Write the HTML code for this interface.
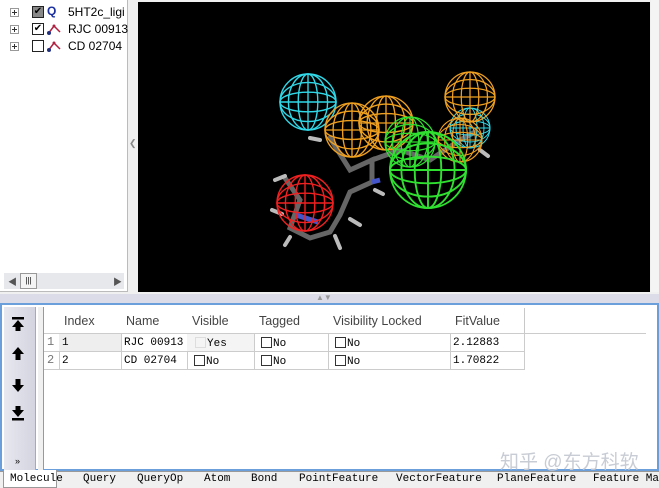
<!DOCTYPE html>
<html><head><style>
*{margin:0;padding:0;box-sizing:border-box}
body{width:659px;height:488px;overflow:hidden;background:#f0f0f0;font-family:"Liberation Sans","Noto Sans CJK SC",sans-serif;position:relative}
.a{position:absolute}
.cb{display:inline-block;width:11px;height:11px;border:1px solid #333;background:#fff;vertical-align:-2px;margin-right:1px}
.hd{position:absolute;top:0;height:25px;border-right:1px solid #c8c8c8;font-size:12.5px;color:#444;padding:6px 0 0 5px;background:#fff}
.c{position:absolute;height:18px;border-right:1px solid #ccc;border-bottom:1px solid #ccc;font-size:11px;padding:3px 0 0 3px;font-family:"Liberation Mono",monospace;color:#000}
.tab{position:absolute;top:473px;font-size:11px;font-family:"Liberation Mono",monospace}
.pl{position:absolute;width:9px;height:9px;border:1px solid #999;background:#fff}
.pl:before{content:"";position:absolute;left:1px;top:3px;width:5px;height:1px;background:#333}
.pl:after{content:"";position:absolute;left:3px;top:1px;width:1px;height:5px;background:#333}
</style></head><body>
<div class="a" style="left:0;top:0;width:128px;height:292px;background:#fff;border-right:1px solid #bbb;border-bottom:1px solid #bbb"></div>
<div class="a" style="left:2px;top:0;width:125px;height:60px;font-size:12px;color:#000">
 <div class="pl" style="left:8px;top:8px"></div>
 <div class="a" style="left:30px;top:6px;width:12px;height:12px;border:1px solid #222;background:#888;color:#000;font-size:10px;line-height:10px;text-align:center">✔</div>
 <div class="a" style="left:45px;top:4px;color:#1a2fa0;font-weight:bold">Q</div>
 <div class="a" style="left:66px;top:5px;white-space:nowrap">5HT2c_ligi</div>
 <div class="pl" style="left:8px;top:25px"></div>
 <div class="a" style="left:30px;top:23px;width:12px;height:12px;border:1px solid #222;background:#fff;font-size:10px;line-height:10px;text-align:center">✔</div>
 <svg class="a" style="left:44px;top:22px" width="16" height="14"><path d="M2 12L8 4L14 10" stroke="#b02040" stroke-width="1.5" fill="none"/><circle cx="3" cy="11" r="2" fill="#203080"/><circle cx="8" cy="4" r="1.5" fill="#b02040"/></svg>
 <div class="a" style="left:66px;top:22px;white-space:nowrap">RJC 00913</div>
 <div class="pl" style="left:8px;top:42px"></div>
 <div class="a" style="left:30px;top:40px;width:12px;height:12px;border:1px solid #222;background:#fff"></div>
 <svg class="a" style="left:44px;top:39px" width="16" height="14"><path d="M2 12L8 4L14 10" stroke="#b02040" stroke-width="1.5" fill="none"/><circle cx="3" cy="11" r="2" fill="#203080"/><circle cx="8" cy="4" r="1.5" fill="#b02040"/></svg>
 <div class="a" style="left:66px;top:39px;white-space:nowrap">CD 02704</div>
</div>
<div class="a" style="left:4px;top:273px;width:120px;height:16px;background:#e6e8ec"></div>
<div class="a" style="left:8px;top:275px;font-size:9px;color:#555">◀</div>
<div class="a" style="left:20px;top:273px;width:17px;height:16px;background:#f4f4f4;border:1px solid #999;font-size:8px;text-align:center;line-height:14px">|||</div>
<div class="a" style="left:113px;top:275px;font-size:9px;color:#555">▶</div>
<div class="a" style="left:129px;top:138px;font-size:9px;color:#888">❮</div>
<div class="a" style="left:138px;top:2px;width:512px;height:290px;background:#000"></div>
<svg class="a" style="left:138px;top:2px" width="512" height="290" viewBox="138 2 512 290">
<defs><symbol id="s" viewBox="-1 -1 2 2" overflow="visible"><g fill="none" stroke-width="0.05">
<circle r="1"/><ellipse rx="0.35" ry="1"/><ellipse rx="0.7" ry="1"/><line x1="0" y1="-1" x2="0" y2="1"/>
<ellipse rx="1" ry="0.35"/><ellipse rx="1" ry="0.7"/><line x1="-1" y1="0" x2="1" y2="0"/></g></symbol></defs>
<g stroke="#666" stroke-width="5" stroke-linecap="round" fill="none">
<path d="M330 138 L350 170 L372 160 L372 182 L350 192 L340 215 L330 232"/>
<path d="M285 178 L300 200 L290 228 L310 238 L330 232"/>
<path d="M372 160 L400 150 L430 160 L460 140 L475 132"/>
</g>
<g stroke="#bbb" stroke-width="4" stroke-linecap="round">
<path d="M275 180l10 -4M272 210l10 4M285 245l5-8M340 248l-5-12M360 225l-10-6M375 190l8 4M480 150l8 6M320 140l-10-2"/>
</g>
<path d="M372 182 L380 180" stroke="#4455cc" stroke-width="5"/>
<path d="M296 215 L318 222" stroke="#4455cc" stroke-width="5"/>
<use href="#s" x="280" y="74" width="56" height="56" stroke="#30d8e8"/>
<use href="#s" x="450" y="108" width="40" height="40" stroke="#30d8e8"/>
<use href="#s" x="325" y="103" width="54" height="54" stroke="#f0a020"/>
<use href="#s" x="359" y="96" width="54" height="54" stroke="#f0a020"/>
<use href="#s" x="445" y="72" width="50" height="50" stroke="#f0a020"/>
<use href="#s" x="438" y="118" width="44" height="44" stroke="#f0a020"/>
<use href="#s" x="385" y="117" width="50" height="50" stroke="#30e030"/>
<use href="#s" x="390" y="132" width="76" height="76" stroke="#30e030"/>
<use href="#s" x="277" y="175" width="56" height="56" stroke="#f02020"/>
</svg>
<div class="a" style="left:651px;top:0;width:8px;height:292px;background:#f4f4f4"></div>
<div class="a" style="left:0;top:294px;width:659px;height:9px;background:#dcdce8"></div>
<div class="a" style="left:316px;top:293px;font-size:8px;color:#999">▲▼</div>
<div class="a" style="left:0;top:303px;width:659px;height:168px;border:2px solid #6a9fdc;background:#fff"></div>
<div class="a" style="left:4px;top:307px;width:32px;height:163px;background:linear-gradient(90deg,#e8e8f0,#d4d4e0);border-right:1px solid #aaa"></div>
<svg class="a" style="left:10px;top:316px" width="18" height="110">
<rect x="2" y="1" width="12" height="2.5"/><path d="M8 4L2 11H5.5V15H10.5V11H14Z"/>
<path d="M8 31L2 38H5.5V44H10.5V38H14Z"/>
<path d="M8 76L2 69H5.5V63H10.5V69H14Z"/>
<path d="M8 101L2 94H5.5V90H10.5V94H14Z"/><rect x="2" y="102" width="12" height="2.5"/>
</svg>
<div class="a" style="left:15px;top:456px;font-size:9px">»</div>
<div class="a" style="left:38px;top:307px;width:6px;height:163px;background:#f0f0f0;border-right:1px solid #999"></div>
<div class="a" style="left:44px;top:308px;width:602px;height:161px;background:#fff">
 <div class="hd" style="left:0;width:16px"></div>
 <div class="hd" style="left:15px;width:63px">Index</div>
 <div class="hd" style="left:77px;width:67px">Name</div>
 <div class="hd" style="left:143px;width:68px">Visible</div>
 <div class="hd" style="left:210px;width:75px">Tagged</div>
 <div class="hd" style="left:284px;width:123px">Visibility Locked</div>
 <div class="hd" style="left:406px;width:75px">FitValue</div>
 <div class="a" style="left:0;top:25px;width:602px;border-top:1px solid #ccc"></div>
 <div class="c" style="left:0;top:26px;width:16px;color:#777;font-size:12px;padding-top:1px">1</div>
 <div class="c" style="left:15px;top:26px;width:63px;background:#eee">1</div>
 <div class="c" style="left:77px;top:26px;width:67px">RJC 00913</div>
 <div class="c" style="left:143px;top:26px;width:68px;background:#f4f4f4;padding-left:8px"><span class="cb" style="border-color:#ddd;background:#f4f4f4"></span>Yes</div>
 <div class="c" style="left:210px;top:26px;width:75px;padding-left:7px"><span class="cb"></span>No</div>
 <div class="c" style="left:284px;top:26px;width:123px;padding-left:7px"><span class="cb"></span>No</div>
 <div class="c" style="left:406px;top:26px;width:75px">2.12883</div>
 <div class="c" style="left:0;top:44px;width:16px;color:#777;font-size:12px;padding-top:1px">2</div>
 <div class="c" style="left:15px;top:44px;width:63px">2</div>
 <div class="c" style="left:77px;top:44px;width:67px">CD 02704</div>
 <div class="c" style="left:143px;top:44px;width:68px;padding-left:7px"><span class="cb"></span>No</div>
 <div class="c" style="left:210px;top:44px;width:75px;padding-left:7px"><span class="cb"></span>No</div>
 <div class="c" style="left:284px;top:44px;width:123px;padding-left:7px"><span class="cb"></span>No</div>
 <div class="c" style="left:406px;top:44px;width:75px">1.70822</div>
</div>
<div class="a" style="left:500px;top:447px;font-size:19px;color:#c8ccd4">知乎 @东方科软</div>
<div class="a" style="left:0;top:471px;width:659px;height:17px;background:#f0f0f0;border-top:1px solid #999"></div>
<div class="a" style="left:3px;top:470px;width:54px;height:18px;background:#fff;border:1px solid #999;border-top:none"></div>
<div class="tab" style="left:10px">Molecule</div>
<div class="tab" style="left:83px">Query</div>
<div class="tab" style="left:137px">QueryOp</div>
<div class="tab" style="left:204px">Atom</div>
<div class="tab" style="left:251px">Bond</div>
<div class="tab" style="left:299px">PointFeature</div>
<div class="tab" style="left:396px">VectorFeature</div>
<div class="tab" style="left:497px">PlaneFeature</div>
<div class="tab" style="left:593px;white-space:nowrap">Feature Ma</div>
</body></html>
